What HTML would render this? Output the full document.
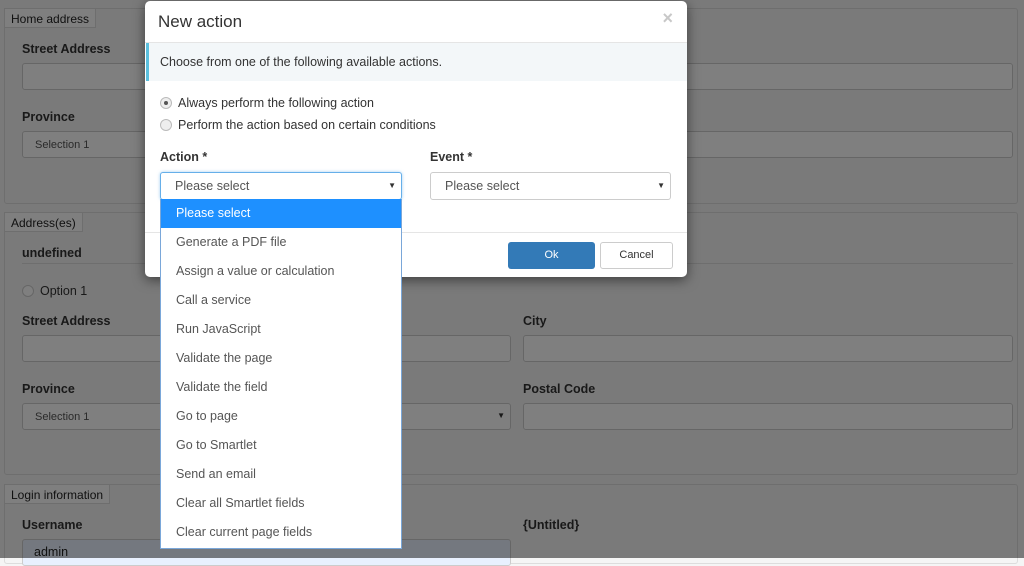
<!DOCTYPE html>
<html><head><meta charset="utf-8"><style>
*{box-sizing:border-box;margin:0;padding:0}
body{width:1024px;height:558px;overflow:hidden;font-family:"Liberation Sans",sans-serif;position:relative;color:#333;background:#f5f5f5}
.abs{position:absolute}
.panel{position:absolute;left:4px;width:1014px;border:1px solid #ddd;border-radius:3px;background:#f5f5f5}
.leg{position:absolute;left:4px;background:#fff;border:1px solid #ddd;font-size:12px;padding:3px 6px;color:#222;height:20px}
.lbl{position:absolute;font-weight:bold;font-size:12.5px;color:#333}
.inp{position:absolute;height:27px;border:1px solid #ccc;border-radius:3px;background:#fff;font-size:11px;color:#555;padding:7px 12px}
#ov{position:absolute;left:0;top:0;width:1024px;height:558px;background:rgba(0,0,0,0.5)}
.modal{position:absolute;left:145px;top:1px;width:542px;height:276px;background:#fff;border-radius:5px;box-shadow:0 3px 12px rgba(0,0,0,.5)}
.m{font-size:12.5px;color:#333}
.sel{position:absolute;height:28px;border:1px solid #ccc;border-radius:3px;font-size:12.5px;color:#555;padding:6px 14px;background:#fff}
.arr{position:absolute;right:5px;top:8px;font-size:8px;color:#333}
.dd{position:absolute;left:160px;top:199px;width:242px;height:350px;background:#fff;border:1px solid #7aa7d9;border-top:none}
.dd div{height:29px;line-height:29px;padding-left:15px;font-size:12.5px;color:#555}
.radio{position:absolute;width:12px;height:12px;border-radius:50%;border:1px solid #bbb;background:#eee}
</style></head><body>
<div class="panel" style="top:8px;height:196px"></div>
<div class="leg" style="top:8px">Home address</div>
<div class="lbl" style="left:22px;top:42px">Street Address</div>
<div class="inp" style="left:22px;top:63px;width:991px"></div>
<div class="lbl" style="left:22px;top:110px">Province</div>
<div class="inp" style="left:22px;top:131px;width:489px">Selection 1</div>
<div class="inp" style="left:523px;top:131px;width:490px"></div>

<div class="panel" style="top:212px;height:263px"></div>
<div class="leg" style="top:212px">Address(es)</div>
<div class="lbl" style="left:22px;top:246px">undefined</div>
<div class="abs" style="left:22px;top:263px;width:991px;height:1px;background:#ddd"></div>
<div class="radio" style="left:22px;top:285px;background:#fff;border-color:#ccc"></div>
<div class="abs" style="left:40px;top:284px;font-size:12.5px;color:#333">Option 1</div>
<div class="lbl" style="left:22px;top:314px">Street Address</div>
<div class="inp" style="left:22px;top:335px;width:489px"></div>
<div class="lbl" style="left:523px;top:314px">City</div>
<div class="inp" style="left:523px;top:335px;width:490px"></div>
<div class="lbl" style="left:22px;top:382px">Province</div>
<div class="inp" style="left:22px;top:403px;width:489px">Selection 1<span style="position:absolute;right:5px;top:7px;font-size:8px;color:#333">▼</span></div>
<div class="lbl" style="left:523px;top:382px">Postal Code</div>
<div class="inp" style="left:523px;top:403px;width:490px"></div>

<div class="panel" style="top:484px;height:80px"></div>
<div class="leg" style="top:484px">Login information</div>
<div class="lbl" style="left:22px;top:518px">Username</div>
<div class="inp" style="left:22px;top:539px;width:489px;background:#e8f0fe;font-size:12.5px;padding:5px 11px;color:#222">admin</div>
<div class="lbl" style="left:523px;top:518px">{Untitled}</div>

<div id="ov"></div>

<div class="modal">
 <div class="abs" style="left:13px;top:11px;font-size:17px;color:#333">New action</div>
 <div class="abs" style="right:14px;top:7px;font-size:18px;color:#c8c8c8;font-weight:bold">×</div>
 <div class="abs" style="left:0;top:41px;width:542px;height:1px;background:#e5e5e5"></div>
 <div class="abs m" style="left:1px;top:42px;width:541px;height:38px;background:#f3f7f9;border-left:3px solid #5bc0de;padding:12px 11px">Choose from one of the following available actions.</div>
 <div class="radio" style="left:15px;top:96px"><div style="width:4px;height:4px;border-radius:50%;background:#555;margin:3px"></div></div>
 <div class="abs m" style="left:33px;top:95px">Always perform the following action</div>
 <div class="radio" style="left:15px;top:118px"></div>
 <div class="abs m" style="left:33px;top:117px">Perform the action based on certain conditions</div>
 <div class="abs" style="left:15px;top:149px;font-size:12.5px;font-weight:bold;color:#333">Action *</div>
 <div class="abs" style="left:285px;top:149px;font-size:12.5px;font-weight:bold;color:#333">Event *</div>
 <div class="sel" style="left:15px;top:171px;width:242px;border-color:#66afe9;box-shadow:0 0 3px rgba(102,175,233,.6)">Please select<span class="arr">▼</span></div>
 <div class="sel" style="left:285px;top:171px;width:241px">Please select<span class="arr">▼</span></div>
 <div class="abs" style="left:0;top:231px;width:542px;height:1px;background:#e5e5e5"></div>
 <div class="abs" style="left:363px;top:241px;width:87px;height:27px;background:#337ab7;border-radius:3px;color:#fff;font-size:11px;text-align:center;line-height:27px">Ok</div>
 <div class="abs" style="left:455px;top:241px;width:73px;height:27px;border:1px solid #ccc;border-radius:3px;color:#333;font-size:11px;text-align:center;line-height:25px">Cancel</div>
</div>
<div class="dd">
 <div style="background:#1e90ff;color:#fff">Please select</div>
 <div>Generate a PDF file</div><div>Assign a value or calculation</div><div>Call a service</div><div>Run JavaScript</div><div>Validate the page</div><div>Validate the field</div><div>Go to page</div><div>Go to Smartlet</div><div>Send an email</div><div>Clear all Smartlet fields</div><div>Clear current page fields</div>
</div>
</body></html>
